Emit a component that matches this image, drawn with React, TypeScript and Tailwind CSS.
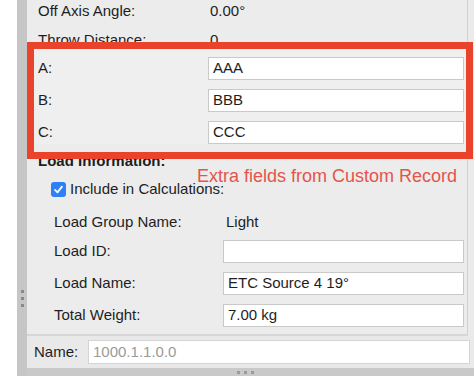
import React from "react";

function TextRow({ label, value, className = "", indent = false }: { label: string; value: string; className?: string; indent?: boolean }) {
  return (
    <div className={`flex items-center h-[18px] ${indent ? "pl-[27px]" : "pl-[11px]"} ${className}`}>
      <span className={`${indent ? "w-[169px]" : "w-[170px]"} shrink-0`}>{label}</span>
      <span className={indent ? "pl-[3px]" : "pl-[2px]"}>{value}</span>
    </div>
  );
}

function InputRow({ label, value, className = "", indent = false }: { label: string; value: string; className?: string; indent?: boolean }) {
  return (
    <div className={`flex items-center h-[23px] ${indent ? "pl-[27px]" : "pl-[11px]"} ${className}`}>
      <span className={`${indent ? "w-[169px]" : "w-[170px]"} shrink-0`}>{label}</span>
      <div
        className={`${indent ? "w-[241px]" : "w-[256px]"} h-[23px] bg-white border border-[#c9c9c9] flex items-center pl-[4px]`}
      >
        {value}
      </div>
    </div>
  );
}

export default function App() {
  return (
    <div
      className="relative w-[474px] h-[376px] overflow-hidden flex bg-[#ebebeb] text-[15px] text-[#1e1e1e]"
      style={{ fontFamily: '"Liberation Sans", Arial, sans-serif' }}
    >
      {/* left gutter + splitter */}
      <div className="w-[17px] shrink-0 bg-white" />
      <div className="w-[10px] shrink-0 bg-[#c6c6c6] flex flex-col items-center pt-[290px] gap-[4px]">
        <span className="w-[3px] h-[3px] bg-[#8a8a8a]" />
        <span className="w-[3px] h-[3px] bg-[#8a8a8a]" />
        <span className="w-[3px] h-[3px] bg-[#8a8a8a]" />
      </div>

      <div className="flex-1 flex flex-col">
        {/* property panel */}
        <div className="h-[336px] shrink-0 border-b-2 border-[#d6d6d6] border-r border-r-[#d2d2d2] mr-[6px] bg-[#ececec]">
          <TextRow label="Off Axis Angle:" value="0.00°" className="mt-[2px]" />
          <TextRow label="Throw Distance:" value="0" className="mt-[11px]" />
          <div className="bg-[#efefef]">
            <InputRow label="A:" value="AAA" className="pt-[8px] h-[31px]" />
            <InputRow label="B:" value="BBB" className="mt-[9px]" />
            <InputRow label="C:" value="CCC" className="mt-[9px]" />
          </div>
          <div className="h-[18px] mt-[8px] pl-[11px] flex items-center font-bold">Load Information:</div>
          <div className="h-[18px] mt-[10px] pl-[24px] flex items-center gap-[4px]">
            <span className="w-[15px] h-[15px] rounded-[3px] bg-[#2f7ff7] flex items-center justify-center">
              <svg width="11" height="11" viewBox="0 0 12 12" fill="none">
                <path d="M2.2 6.4 L4.9 9.1 L9.8 2.9" stroke="white" strokeWidth="1.9" strokeLinecap="round" strokeLinejoin="round" />
              </svg>
            </span>
            <span>Include in Calculations:</span>
          </div>
          <TextRow label="Load Group Name:" value="Light" indent className="mt-[15px]" />
          <InputRow label="Load ID:" value="" indent className="mt-[9px]" />
          <InputRow label="Load Name:" value="ETC Source 4 19°" indent className="mt-[9px]" />
          <InputRow label="Total Weight:" value="7.00 kg" indent className="mt-[9px]" />
        </div>

        {/* name row */}
        <div className="h-[32px] shrink-0 flex items-center pl-[7px] bg-[#e9e9e9]">
          <span className="w-[54px] shrink-0">Name:</span>
          <div className="w-[382px] h-[24px] bg-white border border-[#d4d4d4] flex items-center pl-[4px] text-[#9a9a9a]">
            1000.1.1.0.0
          </div>
        </div>

        {/* bottom splitter */}
        <div className="flex-1 bg-[#c9c9c9] flex justify-center items-end pb-[2px] gap-[4px] pr-[10px]">
          <span className="w-[3px] h-[3px] bg-[#9a9a9a]" />
          <span className="w-[3px] h-[3px] bg-[#9a9a9a]" />
          <span className="w-[3px] h-[3px] bg-[#9a9a9a]" />
        </div>
      </div>

      {/* annotation overlay */}
      <div className="absolute left-[27px] top-[42px] w-[446px] h-[117px] border-[7px] border-[#e9432b] pointer-events-none" />
      <div className="absolute left-[197px] top-[165px] text-[18px] leading-[22px] text-[#e4544c]">
        Extra fields from Custom Record
      </div>
    </div>
  );
}
